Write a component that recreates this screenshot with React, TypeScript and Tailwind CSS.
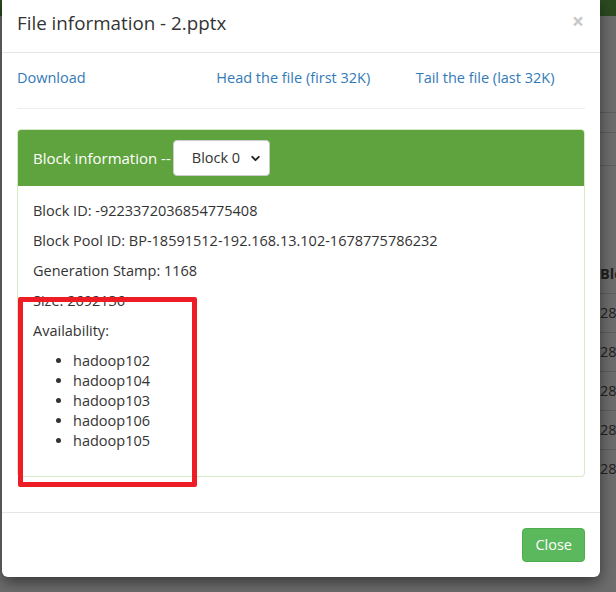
import { ChevronDown } from "lucide-react";

const hosts = ["hadoop102", "hadoop104", "hadoop103", "hadoop106", "hadoop105"];

export default function App() {
  return (
    <div className="relative h-[592px] w-[616px] overflow-hidden bg-[#6d6d6d] font-['Open_Sans',sans-serif] text-[14.5px] leading-[20px] text-[#333]">
      {/* page behind the backdrop */}
      <div className="h-[16px] bg-[#2c4a20]" />
      <div className="ml-[600px] flex flex-col">
        <div className="mt-[96px] h-[20px] border-t border-[#5e5e5e]" />
        <div className="h-[33px] border-t border-[#5e5e5e]" />
        <div className="h-[90px] border-t border-[#5e5e5e]" />
        <div className="h-[38px] pt-[9px] font-bold text-[#1e1e1e]">Block</div>
        {[0, 1, 2, 3, 4].map((i) => (
          <div key={i} className="h-[39px] border-t border-[#5e5e5e] pt-[9px] text-[#222]">
            2871
          </div>
        ))}
      </div>

      {/* modal */}
      <div className="absolute left-[2px] top-0 w-[598px] rounded-b-[6px] bg-white shadow-[0_5px_15px_rgba(0,0,0,0.5)]">
        <div className="flex h-[53px] items-start justify-between border-b border-[#e5e5e5] px-[15px] pt-[10px]">
          <h4 className="text-[18.8px] leading-[26px] text-[#333]">File information - 2.pptx</h4>
          <button className="mr-[1px] mt-[1px] text-[21px] font-bold leading-[21px] text-[#c8c8c8]">×</button>
        </div>

        <div className="p-[15px]">
          <div className="mx-[-15px] grid grid-cols-3 text-[#337ab7]">
            <a href="#" className="px-[15px]">Download</a>
            <a href="#" className="px-[15px]">Head the file (first 32K)</a>
            <a href="#" className="px-[15px]">Tail the file (last 32K)</a>
          </div>
          <hr className="my-[20px] border-[#eee]" />

          <div className="mb-[20px] rounded-[4px] border border-[#d6e9c6]">
            <div className="flex h-[56px] items-center rounded-t-[3px] bg-[#5fa33e] px-[15px] text-[15px] text-white">
              <span>Block information --</span>
              <div className="ml-[2px] flex h-[36px] w-[97px] items-center justify-between rounded-[4px] border border-[#ccc] bg-white pl-[18px] pr-[7px] text-[#333]">
                <span className="text-[14.5px]">Block 0</span>
                <ChevronDown size={13} strokeWidth={3.5} className="text-[#222]" />
              </div>
            </div>
            <div className="p-[15px]">
              <p className="mb-[10px]">Block ID: -9223372036854775408</p>
              <p className="mb-[10px]">Block Pool ID: BP-18591512-192.168.13.102-1678775786232</p>
              <p className="mb-[10px]">Generation Stamp: 1168</p>
              <p className="mb-[10px]">Size: 2692136</p>
              <p className="mb-[10px]">Availability:</p>
              <ul className="mb-[10px] list-disc pl-[40px]">
                {hosts.map((h) => (
                  <li key={h}>{h}</li>
                ))}
              </ul>
            </div>
          </div>
        </div>

        <div className="flex justify-end border-t border-[#e5e5e5] p-[15px]">
          <button className="h-[34px] rounded-[4px] border border-[#4cae4c] bg-[#5cb85c] px-[12px] text-[14.5px] text-white">
            Close
          </button>
        </div>
      </div>

      {/* red annotation */}
      <div className="absolute left-[18px] top-[297px] h-[190px] w-[179px] rounded-[2px] border-[5px] border-[#ee1d25]" />
    </div>
  );
}
